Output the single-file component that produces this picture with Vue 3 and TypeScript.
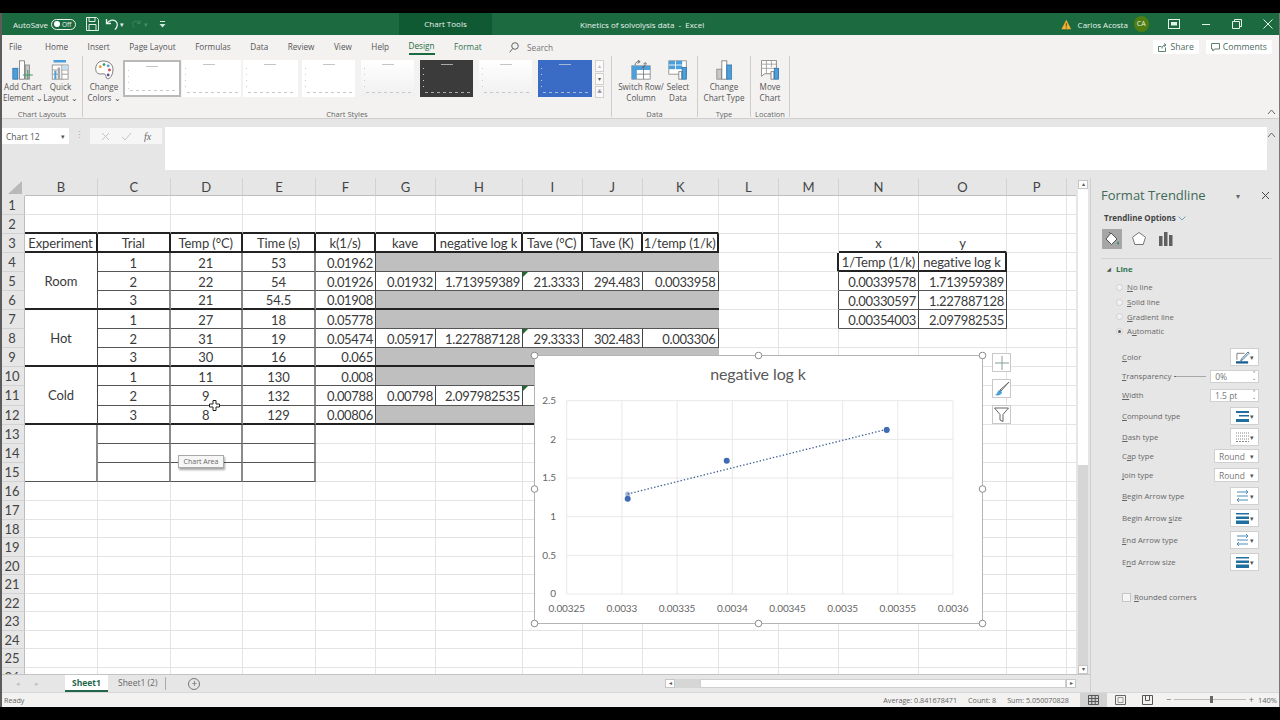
<template>
  <div class="screen">
    <div class="window">
      <header class="titlebar">
        <div class="qat">
          <span class="autosave">AutoSave</span>
          <span class="toggle"><i></i>Off</span>
          <svg class="qicon" width="13" height="14" viewBox="0 0 13 14" fill="none" stroke="#dfeee6"><path d="M.5.5h10l2 2v11H.5z" /><path d="M3 .5v4h6v-4M3 13.5v-6h7v6" /></svg>
          <svg class="qicon undo" width="15" height="13" viewBox="0 0 15 13" fill="none" stroke="#e8f2ec" stroke-width="1.3"><path d="M1.5 1v4.5H6" /><path d="M1.8 5.3C4 2.2 8 1.2 10.5 3c2.6 1.9 2.500 5.600-.6 8.600" /></svg>
          <span class="caret light">▾</span>
          <svg class="qicon dim" width="10" height="10" viewBox="0 0 15 13" fill="none" stroke="#4c8c6b" stroke-width="1.2"><path d="M13.500 1v4.500H9" /><path d="M13.200 5.300C11 2.200 7 1.200 4.500 3 1.900 4.900 2 8.600 5.100 11.600" /></svg>
          <span class="caret dimtxt">▾</span>
          <svg class="qicon more" width="7" height="7" viewBox="0 0 7 7" fill="#d5e6dc"><path d="M1 0h5v1H1zM.5 3h6L3.500 6.500z" /></svg>
        </div>
        <div class="context">Chart Tools</div>
        <div class="doc">Kinetics of solvolysis data&nbsp; -&nbsp; Excel</div>
        <div class="account">
          <svg width="11" height="11" viewBox="0 0 11 11"><path d="M5.500.5l5 10h-10z" fill="#f2b233" /><path d="M5.500 4v3.500M5.500 8.500v1" stroke="#5a3d00" /></svg>
          <span class="user">Carlos Acosta</span>
          <span class="avatar">CA</span>
        </div>
        <div class="winbtns">
          <svg width="12" height="10" viewBox="0 0 12 10" fill="none" stroke="#e6f1ea"><rect x=".5" y=".5" width="11" height="9" /><path d="M3 3h6v3.500H3z" fill="#e6f1ea" stroke="none" /></svg>
          <svg width="10" height="10" viewBox="0 0 10 10" stroke="#e6f1ea"><path d="M1 5.500h8" /></svg>
          <svg width="10" height="10" viewBox="0 0 10 10" fill="none" stroke="#e6f1ea"><path d="M.5 2.500h7v7h-7zM2.500 2.500v-2h7v7h-2" /></svg>
          <svg width="10" height="10" viewBox="0 0 10 10" stroke="#e6f1ea"><path d="M.5.500l9 9M9.500.500l-9 9" /></svg>
        </div>
      </header>

      <nav class="tabs">
        <span v-for="t in tabs" :key="t" class="tab" :class="{ active: t === 'Design', green: t === 'Format', first: t === 'File' }">{{ t }}</span>
        <span class="search">
          <svg width="10" height="11" viewBox="0 0 10 11" fill="none" stroke="#666"><circle cx="6" cy="4" r="3.300" /><path d="M3.700 6.500L.7 10.300" /></svg>
          Search
        </span>
        <span class="spacer"></span>
        <span class="pill">
          <svg width="9" height="9" viewBox="0 0 9 9" fill="none" stroke="#5f7f70"><path d="M.5 3.500h3M.5 3.500v5h7v-4M4 5.500c0-2 1.500-3.500 3.500-3.500M6 .500l2 1.500-2 1.500" /></svg>
          Share
        </span>
        <span class="pill">
          <svg width="9" height="9" viewBox="0 0 9 9" fill="none" stroke="#5f7f70"><path d="M.5.500h8v5.500H3.500L1.800 8V6H.5z" /></svg>
          Comments
        </span>
      </nav>

      <section class="ribbon">
        <div class="group g-layouts">
          <div class="items">
            <div class="cmd w-add">
              <svg width="26" height="24" viewBox="0 0 26 24" fill="none"><rect x="1" y="10" width="6" height="13" fill="#4d9fd9" stroke="#2b74ad" /><rect x="9" y="1" width="6" height="22" fill="#fff" stroke="#777" /><rect x="16" y="6" width="5" height="17" fill="#c8c8c8" stroke="#888" /><path d="M13 18h12M19 12v11" stroke="#3f9a6a" stroke-width="1.300" /></svg>
              <span>Add Chart<br />Element ⌄</span>
            </div>
            <div class="cmd w-quick">
              <svg width="22" height="24" viewBox="0 0 22 24" fill="none"><rect x="3" y="0" width="15" height="3" fill="#4d9fd9" /><rect x="1.500" y="6" width="19" height="17" fill="#fff" stroke="#8a8a8a" /><path d="M1.500 12h7M13 12h7M1.500 17h7M13 17h7M13 6v17" stroke="#8a8a8a" /><rect x="4" y="13" width="2.500" height="10" fill="#4d9fd9" /><rect x="8" y="9" width="3" height="14" fill="#a8a8a8" /><rect x="14" y="7" width="6" height="4" fill="#bde0f5" /></svg>
              <span>Quick<br />Layout ⌄</span>
            </div>
          </div>
          <div class="glabel">Chart Layouts</div>
        </div>

        <div class="group g-styles">
          <div class="items">
            <div class="cmd w-colors">
              <svg width="24" height="24" viewBox="0 0 24 24" fill="#fff" stroke="#666"><path d="M6 2.500c5-3 15-1 16.500 6.500 1 5-1.500 13.500-6 13.500-3.500 0-1-4-3.500-5.500-3-1.500-5 1-8.500-1C1 14 1 6 6 2.500z" /><circle cx="7.500" cy="8" r="1.700" fill="#e0a52e" stroke="none" /><circle cx="12" cy="5.500" r="1.700" fill="#3f9a6a" stroke="none" /><circle cx="17" cy="7" r="1.700" fill="#4d9fd9" stroke="none" /><circle cx="18.500" cy="12" r="1.700" fill="#c94c4c" stroke="none" /><circle cx="17" cy="18" r="1.700" fill="#6a4fa0" stroke="none" /></svg>
              <span>Change<br />Colors ⌄</span>
            </div>
            <div class="gallery">
              <div v-for="(t, i) in thumbs" :key="i" class="thumb" :class="t">
                <i class="ttl"></i>
                <i class="dots"></i>
                <i class="axis"></i>
              </div>
              <div class="spin">
                <span>▴</span>
                <span>▾</span>
                <span>≚</span>
              </div>
            </div>
          </div>
          <div class="glabel">Chart Styles</div>
        </div>

        <div class="group g-data">
          <div class="items">
            <div class="cmd w-switch">
              <svg width="24" height="24" viewBox="0 0 24 24" fill="none"><rect x="1" y="7" width="22" height="16" fill="#fff" stroke="#888" /><rect x="1" y="7" width="22" height="5" fill="#4d9fd9" /><rect x="1" y="7" width="6" height="16" fill="#4d9fd9" /><path d="M7 17h16M15 7v16" stroke="#777" /><path d="M5 6c0-3 2-4 5-4M8 0l3 2-3 2M13 9c3 0 4-2 4-5M15 5l2-2 2 2" stroke="#555" /></svg>
              <span>Switch Row/<br />Column</span>
            </div>
            <div class="cmd w-select">
              <svg width="24" height="24" viewBox="0 0 24 24" fill="none"><rect x="1" y="1" width="21" height="16" fill="#fff" stroke="#888" /><rect x="1" y="1" width="16" height="10" fill="#4d9fd9" /><path d="M1 6h16M9 1v10" stroke="#fff" /><rect x="13" y="14" width="3.500" height="9" fill="#fff" stroke="#777" /><rect x="17" y="9" width="5" height="14" fill="#4d9fd9" stroke="#2b74ad" /></svg>
              <span>Select<br />Data</span>
            </div>
          </div>
          <div class="glabel">Data</div>
        </div>

        <div class="group g-type">
          <div class="items">
            <div class="cmd w-change">
              <svg width="20" height="24" viewBox="0 0 20 24" fill="none"><rect x="1" y="11" width="5.500" height="12" fill="#c8c8c8" stroke="#888" /><rect x="7" y="1" width="6" height="22" fill="#fff" stroke="#777" /><rect x="13" y="6" width="6" height="17" fill="#4d9fd9" stroke="#2b74ad" /></svg>
              <span>Change<br />Chart Type</span>
            </div>
          </div>
          <div class="glabel">Type</div>
        </div>

        <div class="group g-loc">
          <div class="items">
            <div class="cmd w-move">
              <svg width="22" height="24" viewBox="0 0 22 24" fill="none"><path d="M.5.500h18v16h-14l-4 3z" fill="#fff" stroke="#777" /><path d="M.5 5h18M.5 10h18M6.500.5v16M12.500.5v8" stroke="#999" /><rect x="12" y="14" width="3.500" height="9" fill="#fff" stroke="#777" /><rect x="16" y="10" width="5" height="13" fill="#4d9fd9" stroke="#2b74ad" /></svg>
              <span>Move<br />Chart</span>
            </div>
          </div>
          <div class="glabel">Location</div>
        </div>

        <svg class="collapse" width="9" height="6" viewBox="0 0 9 6" fill="none" stroke="#666"><path d="M1 5l3.500-4L8 5" /></svg>
      </section>

      <section class="formula">
        <div class="namebox">Chart 12<span>▾</span></div>
        <div class="fdots">⋮</div>
        <div class="fxbox">
          <svg width="9" height="9" viewBox="0 0 9 9" stroke="#c4c4c4" fill="none"><path d="M1 1l7 7M8 1L1 8" /></svg>
          <svg width="11" height="9" viewBox="0 0 11 9" stroke="#c4c4c4" fill="none"><path d="M1 5l3 3 6-7" /></svg>
          <i class="fx">fx</i>
        </div>
        <div class="finput"></div>
        <svg class="fcaret" width="9" height="6" viewBox="0 0 9 6" fill="none" stroke="#666"><path d="M1 5l3.500-4L8 5" /></svg>
      </section>

      <div class="main">
        <div class="workbook">
          <div class="sheetarea">
            <div class="sheet">
              <div class="corner"><i></i></div>
              <div v-for="c in colLetters" :key="c" class="colhead">{{ c }}</div>
              <div v-for="cell in cells" :key="cell.key" :class="cell.cls">{{ cell.text }}</div>

              <div class="chart">
                <svg class="chartsvg" width="449" height="269" viewBox="0 0 449 269">
                  <line v-for="y in yTicks" :key="'gy' + y.label" x1="32.700" x2="419" :y1="y.y" :y2="y.y" class="gridl" />
                  <line v-for="x in xTicks" :key="'gx' + x.label" :x1="x.x" :x2="x.x" y1="45.700" y2="239" class="gridl" />
                  <text x="224" y="18" class="ctitle">negative log k</text>
                  <text v-for="y in yTicks" :key="'ly' + y.label" x="22" :y="y.y - 0.8" class="ylab">{{ y.label }}</text>
                  <text v-for="x in xTicks" :key="'lx' + x.label" :x="x.x" y="253" class="xlab">{{ x.label }}</text>
                  <circle cx="93.700" cy="139" r="2.600" fill="#a9bbdb" />
                  <circle cx="352.700" cy="74.300" r="2.600" fill="#7f9bd0" />
                  <line x1="93.700" y1="139" x2="352.700" y2="74.300" stroke="#3f6192" stroke-width="1.300" stroke-dasharray="1.400 2" />
                  <circle v-for="p in points" :key="p.x" :cx="p.x" :cy="p.y" r="3" fill="#3e6bb3" />
                  <circle v-for="h in handles" :key="h.x + '-' + h.y" :cx="h.x" :cy="h.y" r="3.300" fill="#fff" stroke="#8c8c8c" />
                </svg>
                <div class="adorn">
                  <span><svg width="14" height="14" viewBox="0 0 14 14" stroke="#8a9e94"><path d="M7 0v14M0 7h14" /></svg></span>
                  <span><svg width="16" height="16" viewBox="0 0 16 16" fill="none"><path d="M15 1L7 10l-1-1z" fill="#fff" stroke="#666" /><path d="M6 9c-3 0-2 4-5 5 3 1 7 0 7-3z" fill="#4d9fd9" /></svg></span>
                  <span><svg width="15" height="15" viewBox="0 0 15 15" fill="#fff" stroke="#666"><path d="M.5 1h14L9 7.500v7l-3-1.500V7.500z" /></svg></span>
                </div>
              </div>

              <div class="tip">Chart Area</div>
              <svg class="cursor" width="11" height="11" viewBox="0 0 11 11" fill="#fff" stroke="#222"><path d="M4 .5h3v3.500h3.500v3H7v3.500H4V7H.5V4H4z" /></svg>
            </div>
            <div class="vscroll">
              <span class="sbtn">▴</span>
              <span class="vthumb"></span>
              <span class="vtrack"></span>
              <span class="sbtn">▾</span>
            </div>
          </div>

          <div class="sheettabs">
            <span class="nav">◂</span>
            <span class="nav">▸</span>
            <span class="stab on">Sheet1</span>
            <span class="stab">Sheet1 (2)</span>
            <i class="sep"></i>
            <span class="plus">+</span>
            <span class="hscroll">
              <span class="sbtn">◂</span>
              <span class="htrack"></span>
              <span class="hthumb"></span>
              <span class="sbtn">▸</span>
            </span>
          </div>
        </div>

        <aside class="pane">
          <div class="panehead">
            <span class="panetitle">Format Trendline</span>
            <span class="panecaret">▾</span>
            <svg width="9" height="9" viewBox="0 0 9 9" stroke="#444"><path d="M1 1l7 7M8 1L1 8" /></svg>
          </div>
          <div class="paneopts">Trendline Options <svg width="8" height="5" viewBox="0 0 8 5" fill="none" stroke="#6f9ec0"><path d="M.5.500L4 4 7.500.500" /></svg></div>
          <div class="paneicons">
            <span class="picon sel">
              <svg width="16" height="16" viewBox="0 0 16 16"><path d="M7 2l6 6-5.500 5.500L2 8z" fill="#fff" stroke="#555" /><path d="M5 1l2 2" stroke="#555" /><path d="M14 10c.8 1.300 1.500 2.200.8 3.200-1 .8-2.500-.6-.8-3.200z" fill="#2f8a5a" /></svg>
            </span>
            <span class="picon">
              <svg width="16" height="16" viewBox="0 0 16 16" fill="#fff" stroke="#777"><path d="M8 1.500l6.500 4.700-2.300 7.300H3.800L1.500 6.200z" /></svg>
            </span>
            <span class="picon">
              <svg width="14" height="14" viewBox="0 0 14 14" fill="#5f5f5f"><rect y="4" width="3.500" height="10" /><rect x="5" y="0" width="3.500" height="14" /><rect x="10" y="3" width="3.500" height="11" /></svg>
            </span>
          </div>
          <div class="paneline"></div>
          <div class="section"><span class="tri">◢</span>Line</div>
          <div class="radios">
            <div v-for="r in radios" :key="r.label" class="radio">
              <i :class="{ on: r.on }"></i>
              <span>{{ r.label.split('_')[0] }}<u>{{ r.label.split('_')[1][0] }}</u>{{ r.label.split('_')[1].slice(1) }}</span>
            </div>
          </div>
          <div class="props">
            <div v-for="p in props" :key="p.label" class="prop" :class="'h' + p.h">
              <span class="plabel">{{ p.label.split('_')[0] }}<u>{{ p.label.split('_')[1][0] }}</u>{{ p.label.split('_')[1].slice(1) }}</span>
              <span v-if="p.kind === 'slider'" class="slider"></span>
              <span v-if="p.kind === 'spin' || p.kind === 'slider'" class="ctl spinbox">{{ p.value }}<em>⌃<br />⌄</em></span>
              <span v-else-if="p.kind === 'select'" class="ctl select">{{ p.value }}<em>▾</em></span>
              <span v-else class="ctl iconbtn">
                <svg v-if="p.kind === 'pen'" width="15" height="13" viewBox="0 0 15 13" fill="none"><path d="M1 9V2h8" stroke="#777" /><path d="M13 .5L6 8l-1 2 2-1 7-7z" fill="#fff" stroke="#3d6a95" /><rect y="10.500" width="13" height="2.500" fill="#1f5f8f" /></svg>
                <svg v-else-if="p.kind === 'lines'" width="13" height="11" viewBox="0 0 13 11" fill="#1f6f9f"><rect width="13" height="2" /><rect x="3" y="4" width="10" height="1.500" /><rect y="8" width="13" height="3" /></svg>
                <svg v-else-if="p.kind === 'dash'" width="13" height="10" viewBox="0 0 13 10" stroke="#888" stroke-dasharray="1 1"><path d="M0 1h13M0 4h13M0 7h13" /><path d="M0 9.500h13" stroke-dasharray="2 1" /></svg>
                <svg v-else-if="p.kind === 'arrow'" width="13" height="12" viewBox="0 0 13 12" fill="none" stroke="#4d8fb5"><path d="M1 2h11M1 6h11M1 10h11M10 0l2 2-2 2M3 8l-2 2 2 2" /></svg>
                <svg v-else width="13" height="11" viewBox="0 0 13 11" fill="#1f6f9f"><rect width="13" height="1.500" /><rect y="3.500" width="13" height="2.500" /><rect y="7.500" width="13" height="3.500" /></svg>
                <em>▾</em>
              </span>
            </div>
          </div>
          <div class="rounded"><i></i><span><u>R</u>ounded corners</span></div>
        </aside>
      </div>

      <footer class="status">
        <span>Ready</span>
        <span class="spacer"></span>
        <span class="stat s1">Average: 0.841678471</span>
        <span class="stat s2">Count: 8</span>
        <span class="stat s3">Sum: 5.050070828</span>
        <span class="view on"><svg width="11" height="10" viewBox="0 0 11 10" fill="none" stroke="#555"><path d="M.5.500h10v9H.5zM.5 3.500h10M.5 6.500h10M3.800.5v9M7.200.5v9" /></svg></span>
        <span class="view"><svg width="11" height="10" viewBox="0 0 11 10" fill="none" stroke="#666"><path d="M.5.500h10v9H.5z" /><path d="M3 2.500h5v5H3z" stroke="#999" /></svg></span>
        <span class="view"><svg width="11" height="10" viewBox="0 0 11 10" fill="none" stroke="#555"><path d="M.5.500h10v9H.5zM3.500.5v5h4v-5" /></svg></span>
        <span class="zoomer">
          <b>−</b>
          <span class="ztrack"><i></i></span>
          <b>+</b>
        </span>
        <span class="pct">140%</span>
      </footer>
    </div>
  </div>
</template>

<script setup lang="ts">
const tabs = ['File', 'Home', 'Insert', 'Page Layout', 'Formulas', 'Data', 'Review', 'View', 'Help', 'Design', 'Format']
const thumbs = ['selected', 'wide', 'mid', '', 'soft', 'dark', 'soft', 'blue']
const colLetters = ['B', 'C', 'D', 'E', 'F', 'G', 'H', 'I', 'J', 'K', 'L', 'M', 'N', 'O', 'P', '']

const values: Record<number, Record<string, string>> = {
  3: { B: 'Experiment', C: 'Trial', D: 'Temp (°C)', E: 'Time (s)', F: 'k(1/s)', G: 'kave', H: 'negative log k', I: 'Tave (°C)', J: 'Tave (K)', K: '1/temp (1/k)', N: 'x', O: 'y' },
  4: { B: 'Room', C: '1', D: '21', E: '53', F: '0.01962', N: '1/Temp (1/k)', O: 'negative log k' },
  5: { C: '2', D: '22', E: '54', F: '0.01926', G: '0.01932', H: '1.713959389', I: '21.3333', J: '294.483', K: '0.0033958', N: '0.00339578', O: '1.713959389' },
  6: { C: '3', D: '21', E: '54.5', F: '0.01908', N: '0.00330597', O: '1.227887128' },
  7: { B: 'Hot', C: '1', D: '27', E: '18', F: '0.05778', N: '0.00354003', O: '2.097982535' },
  8: { C: '2', D: '31', E: '19', F: '0.05474', G: '0.05917', H: '1.227887128', I: '29.3333', J: '302.483', K: '0.003306' },
  9: { C: '3', D: '30', E: '16', F: '0.065' },
  10: { B: 'Cold', C: '1', D: '11', E: '130', F: '0.008' },
  11: { C: '2', D: '9', E: '132', F: '0.00788', G: '0.00798', H: '2.097982535' },
  12: { C: '3', D: '8', E: '129', F: '0.00806' }
}

const grayRows = [4, 6, 7, 9, 10, 12]
const blockEnd = [6, 9, 12]
const inMain = (c: string) => 'BCDEFGHIJK'.includes(c)
const inMeasure = (c: string) => 'CDEF'.includes(c)
const inCalc = (c: string) => 'GHIJK'.includes(c)
const rightTable = (c: string) => c === 'N' || c === 'O'

function cellClasses(r: number, c: string): string[] {
  const cls = ['cell']
  const isNum = 'FGHIJKNO'.includes(c) && r > 3 && !(r === 4 && rightTable(c))
  cls.push(isNum ? 'right' : 'center')

  if (inCalc(c) && grayRows.includes(r)) cls.push('fill')

  // bottom edges
  if (r === 2 && inMain(c)) cls.push('bb2')
  if (r === 3 && (inMain(c) || rightTable(c))) cls.push('bb2')
  if (r >= 4 && r <= 12 && (inMeasure(c) || inCalc(c))) cls.push(blockEnd.includes(r) ? 'bb2' : 'bb1')
  if (c === 'B' && [4, 7, 10].includes(r)) cls.push('bb2')
  if (r >= 13 && r <= 15 && 'CDE'.includes(c)) cls.push('bb1')
  if (c === 'B' && r === 13) cls.push('bb1')
  if (r === 4 && rightTable(c)) cls.push('bb2')
  if (r >= 5 && r <= 7 && rightTable(c)) cls.push('bb1')

  // right edges
  if (r === 3 && inMain(c)) cls.push('br2')
  if (r >= 4 && r <= 12 && (c === 'B' || c === 'F')) cls.push('br1')
  if (r >= 4 && r <= 12 && 'CDE'.includes(c)) cls.push('brg')
  if (r >= 13 && r <= 15 && 'BCDE'.includes(c)) cls.push('brg')
  if ([5, 8, 11].includes(r) && inCalc(c)) cls.push('br1')
  if (r >= 5 && r <= 7 && (c === 'M' || rightTable(c))) cls.push('br1')
  if (r === 4 && (c === 'M' || c === 'O')) cls.push('br2')
  if (r === 4 && c === 'N') cls.push('br1')

  if (c === 'B' && [4, 7, 10, 13].includes(r)) cls.push('span3')

  if (c === 'I' && [5, 8, 11].includes(r)) cls.push('flag')
  return cls
}

const covered = (r: number, c: string) => c === 'B' && [5, 6, 8, 9, 11, 12, 14, 15].includes(r)

const cells: { key: string; text: string; cls: string[] }[] = []
for (let r = 1; r <= 26; r++) {
  cells.push({ key: 'h' + r, text: String(r), cls: ['rowhead'] })
  for (const c of 'BCDEFGHIJKLMNOPQ') {
    if (covered(r, c)) continue
    cells.push({ key: c + r, text: values[r]?.[c] ?? '', cls: cellClasses(r, c) })
  }
}

const yTicks = ['2.5', '2', '1.5', '1', '0.5', '0'].map((label, i) => ({ label, y: 45.7 + i * 38.66 }))
const xTicks = ['0.00325', '0.0033', '0.00335', '0.0034', '0.00345', '0.0035', '0.00355', '0.0036'].map((label, i) => ({
  label,
  x: 32.7 + i * 55.19
}))
const points = [
  { x: 93.7, y: 143.7 },
  { x: 192.7, y: 105.7 },
  { x: 352.7, y: 75 }
]
const handles = [
  { x: 0.5, y: 0.5 },
  { x: 224.5, y: 0.5 },
  { x: 448.5, y: 0.5 },
  { x: 0.5, y: 134 },
  { x: 448.5, y: 134 },
  { x: 0.5, y: 268.5 },
  { x: 224.5, y: 268.5 },
  { x: 448.5, y: 268.5 }
]

const radios = [
  { label: '_No line', on: false },
  { label: '_Solid line', on: false },
  { label: '_Gradient line', on: false },
  { label: 'A_utomatic', on: true }
]

const props = [
  { label: '_Color', kind: 'pen', h: 20 },
  { label: '_Transparency', kind: 'slider', value: '0%', h: 18 },
  { label: '_Width', kind: 'spin', value: '1.5 pt', h: 20 },
  { label: '_Compound type', kind: 'lines', h: 22 },
  { label: '_Dash type', kind: 'dash', h: 20 },
  { label: 'C_ap type', kind: 'select', value: 'Round', h: 18 },
  { label: '_Join type', kind: 'select', value: 'Round', h: 20 },
  { label: '_Begin Arrow type', kind: 'arrow', h: 22 },
  { label: 'Begin Arrow _size', kind: 'size', h: 22 },
  { label: '_End Arrow type', kind: 'arrow', h: 22 },
  { label: 'E_nd Arrow size', kind: 'size', h: 22 }
]
</script>

<style>
html,
body {
  background: #000;
}
</style>

<style scoped>
.screen {
  width: 1280px;
  height: 720px;
  padding: 13px 0;
  box-sizing: border-box;
  background: #000;
  overflow: hidden;
  font-family: 'Open Sans', 'Liberation Sans', sans-serif;
  color: #555;
}
.window {
  height: 694px;
  display: flex;
  flex-direction: column;
  border-left: 2px solid #5c5c5c;
  border-right: 1px solid #777;
  box-sizing: border-box;
  background: #f3f2f1;
}
.spacer {
  flex: 1;
}

/* title bar */
.titlebar {
  height: 22px;
  flex: none;
  display: flex;
  align-items: center;
  background: #1c6a40;
  color: #e9f3ed;
  font-size: 8px;
  position: relative;
}
.qat {
  display: flex;
  align-items: center;
  width: 397px;
  padding-left: 11px;
  box-sizing: border-box;
}
.autosave {
  width: 38px;
}
.toggle {
  width: 25px;
  height: 11px;
  border: 1px solid #e9f3ed;
  border-radius: 7px;
  box-sizing: border-box;
  display: flex;
  align-items: center;
  gap: 2px;
  padding-left: 2px;
  font-size: 6.5px;
  margin-right: 10px;
}
.toggle i {
  width: 6px;
  height: 6px;
  border-radius: 50%;
  background: #fff;
}
.qicon {
  margin-right: 6px;
}
.undo {
  margin-right: 0;
}
.caret {
  font-size: 7px;
  margin-right: 7px;
}
.dimtxt {
  color: #4c8c6b;
  margin-left: -3px;
  margin-right: 11px;
}
.more {
  margin-left: 0;
}
.context {
  width: 93px;
  height: 22px;
  line-height: 22px;
  background: #105a33;
  text-align: center;
}
.doc {
  margin-left: 88px;
  width: 140px;
  white-space: nowrap;
}
.account {
  margin-left: 341px;
  display: flex;
  align-items: center;
  width: 88px;
}
.user {
  margin-left: 6px;
  width: 58px;
  white-space: nowrap;
}
.avatar {
  width: 16px;
  height: 16px;
  border-radius: 50%;
  background: #4f7d12;
  font-size: 7px;
  line-height: 16px;
  text-align: center;
}
.winbtns {
  margin-left: 19px;
  display: flex;
  gap: 21px;
  align-items: center;
}

/* tabs */
.tabs {
  height: 21px;
  flex: none;
  display: flex;
  align-items: center;
  gap: 19.5px;
  padding: 3px 7px 0 7px;
  box-sizing: border-box;
  font-size: 8.2px;
  color: #555;
}
.tab {
  height: 14px;
  line-height: 13px;
}
.tab.first {
  margin-right: 3.5px;
}
.tab.active {
  color: #1c6a40;
  border-bottom: 2px solid #1c6a40;
  box-sizing: content-box;
}
.tab.green {
  color: #2e7350;
}
.search {
  margin-left: 8px;
  display: flex;
  align-items: center;
  gap: 8px;
  color: #777;
}
.pill {
  height: 14px;
  background: #fff;
  display: flex;
  align-items: center;
  justify-content: center;
  gap: 3px;
  padding: 0 5px;
  font-size: 8.7px;
  color: #4b6b5c;
  margin-left: -12.5px;
}

/* ribbon */
.ribbon {
  height: 63px;
  flex: none;
  display: flex;
  position: relative;
  border-bottom: 1px solid #cfcfcf;
  box-sizing: border-box;
}
.group {
  display: flex;
  flex-direction: column;
  border-right: 1px solid #cdcdcd;
  margin-bottom: 1px;
  box-sizing: border-box;
}
.items {
  flex: 1;
  display: flex;
  min-height: 0;
}
.glabel {
  height: 6px;
  line-height: 6px;
  text-align: center;
  font-size: 7.5px;
  color: #666;
}
.g-layouts {
  width: 81px;
}
.g-styles {
  width: 529px;
}
.g-data {
  width: 86px;
}
.g-type {
  width: 53px;
}
.g-loc {
  width: 39px;
}
.cmd {
  display: flex;
  flex-direction: column;
  align-items: center;
  font-size: 8.1px;
  line-height: 11px;
  text-align: center;
  color: #555;
  padding-top: 4px;
  white-space: nowrap;
}
.cmd svg {
  height: 20px;
  width: auto;
  margin-bottom: 1px;
}
.w-add {
  width: 42px;
}
.w-quick {
  width: 33px;
}
.w-colors {
  width: 38px;
  margin-left: 2px;
}
.w-switch {
  width: 54px;
  margin-left: 2px;
}
.w-select {
  width: 22px;
  margin-left: -1px;
}
.w-change {
  width: 52px;
}
.w-move {
  width: 38px;
}
.gallery {
  display: flex;
  padding-top: 4px;
  height: 38px;
}
.thumb {
  width: 53px;
  height: 37px;
  margin-right: 6px;
  position: relative;
  background: #fff;
  box-sizing: border-box;
}
.thumb.selected {
  width: 58px;
  margin-right: 1px;
  border: 2px solid #b9b9b9;
}
.thumb.wide {
  width: 59px;
  margin-right: 2px;
}
.thumb.mid {
  width: 55px;
  margin-right: 4px;
}
.thumb.soft {
  background: linear-gradient(#fff, #f0f0f0);
}
.thumb.dark {
  background: #3b3b3b;
}
.thumb.blue {
  width: 54px;
  margin-right: 3px;
  background: #3a6cc6;
}
.ttl {
  position: absolute;
  top: 4px;
  left: 21px;
  width: 12px;
  height: 1px;
  background: #c4c4c4;
}
.dots {
  position: absolute;
  left: 3px;
  top: 8px;
  bottom: 5px;
  width: 1px;
  background: repeating-linear-gradient(#ccc 0 1px, transparent 1px 6px);
}
.axis {
  position: absolute;
  left: 5px;
  right: 3px;
  bottom: 4px;
  height: 1px;
  background: repeating-linear-gradient(90deg, #c8c8c8 0 3px, transparent 3px 6px);
}
.dark .ttl,
.blue .ttl,
.dark .axis,
.blue .axis {
  filter: brightness(1.1);
  opacity: 0.7;
}
.spin {
  width: 9px;
  height: 37px;
  display: flex;
  flex-direction: column;
  gap: 1px;
  font-size: 6px;
  text-align: center;
  color: #555;
}
.spin span {
  flex: 1;
  background: #fafafa;
  border: 1px solid #d0d0d0;
  line-height: 10px;
  box-sizing: border-box;
}
.spin span:first-child {
  color: #bbb;
}
.collapse {
  position: absolute;
  right: 3px;
  bottom: 3px;
}

/* formula bar */
.formula {
  height: 59px;
  flex: none;
  background: #e6e6e6;
  display: flex;
  align-items: flex-start;
  padding-top: 8px;
  box-sizing: border-box;
  position: relative;
  font-size: 8.5px;
}
.namebox {
  width: 67px;
  height: 16px;
  margin-top: 1px;
  background: #fff;
  display: flex;
  align-items: center;
  justify-content: space-between;
  padding: 0 4px;
  box-sizing: border-box;
  color: #555;
}
.namebox span {
  font-size: 7px;
}
.fdots {
  width: 21px;
  text-align: center;
  color: #aaa;
  line-height: 16px;
}
.fxbox {
  width: 72px;
  height: 16px;
  margin-top: 1px;
  background: #f6f6f6;
  display: flex;
  align-items: center;
  justify-content: space-around;
  padding: 0 5px;
  box-sizing: border-box;
}
.fx {
  font-family: 'Liberation Serif', serif;
  font-size: 10px;
  color: #666;
}
.finput {
  margin-left: 3px;
  width: 1102px;
  height: 43px;
  background: #fff;
}
.fcaret {
  position: absolute;
  right: 3px;
  top: 13px;
}

/* sheet */
.main {
  flex: 1;
  min-height: 0;
  display: flex;
}
.workbook {
  width: 1089px;
  flex: none;
  display: flex;
  flex-direction: column;
  background: #e6e6e6;
  border-right: 1px solid #cfcfcf;
  box-sizing: border-box;
}
.sheetarea {
  height: 496px;
  flex: none;
  display: flex;
}
.sheet {
  width: 1075px;
  height: 496px;
  overflow: hidden;
  position: relative;
  display: grid;
  grid-template-columns: 23px 73px 72.500px 72.500px 73px 60px 60px 87px 59.500px 60.500px 75.500px 60.500px 60px 80px 88px 60px 10px;
  grid-template-rows: 18px repeat(17, 19.050px) repeat(8, 18.500px) 7px;
  background: #fff;
  font-family: Lato, 'Liberation Sans', sans-serif;
  font-size: 13px;
  letter-spacing: -0.1px;
  color: #3a3a3a;
}
.corner {
  background: #e6e6e6;
  position: relative;
}
.corner i {
  position: absolute;
  right: 3px;
  bottom: 2px;
  border-style: solid;
  border-width: 0 0 13px 14px;
  border-color: transparent transparent #b9b9b9 transparent;
}
.colhead {
  background: #e6e6e6;
  border-right: 1px solid #d2d2d2;
  border-bottom: 1px solid #bdbdbd;
  box-sizing: border-box;
  text-align: center;
  line-height: 18px;
  color: #444;
}
.rowhead {
  background: #e6e6e6;
  border-right: 1px solid #bdbdbd;
  border-bottom: 1px solid #d2d2d2;
  box-sizing: border-box;
  text-align: center;
  line-height: 19px;
  color: #444;
  padding-right: 2px;
  overflow: hidden;
}
.cell {
  border-right: 1px solid #e3e3e3;
  border-bottom: 1px solid #e3e3e3;
  box-sizing: border-box;
  display: flex;
  align-items: center;
  padding-top: 1px;
  white-space: nowrap;
  overflow: hidden;
  min-width: 0;
  position: relative;
}
.center {
  justify-content: center;
}
.right {
  justify-content: flex-end;
  padding-right: 2px;
  letter-spacing: -0.32px;
}
.fill {
  background: #bfbfbf;
  border-right: 0;
  border-bottom-color: transparent;
}
.bb1 {
  border-bottom: 1px solid #555;
}
.bb2 {
  border-bottom: 2px solid #222;
}
.br1 {
  border-right: 1px solid #444;
}
.brg {
  border-right: 2px solid #8a8a8a;
}
.br2 {
  border-right: 2px solid #222;
}
.span3 {
  grid-row: span 3;
}
.flag::before {
  content: '';
  position: absolute;
  left: 0;
  top: 0;
  border-style: solid;
  border-width: 5px 5px 0 0;
  border-color: #1c6e2c transparent transparent transparent;
}

/* chart overlay */
.chart {
  position: absolute;
  left: 532px;
  top: 177px;
  width: 449px;
  height: 269px;
  background: #fff;
  box-shadow: inset 0 0 0 1px #b4b4b4;
}
.chartsvg {
  overflow: visible;
  display: block;
  position: relative;
  z-index: 1;
}
.gridl {
  stroke: #e8e8e8;
  stroke-width: 1;
}
.ctitle {
  font-size: 16px;
  fill: #595959;
  text-anchor: middle;
  dominant-baseline: central;
}
.ylab,
.xlab {
  font-size: 10px;
  fill: #666;
  dominant-baseline: central;
}
.ylab {
  text-anchor: end;
}
.xlab {
  text-anchor: middle;
}
.adorn {
  position: absolute;
  left: 458px;
  top: -2px;
  display: flex;
  flex-direction: column;
  gap: 7px;
}
.adorn span {
  width: 19px;
  height: 19px;
  background: #fff;
  border: 1px solid #c8c8c8;
  box-sizing: border-box;
  display: flex;
  align-items: center;
  justify-content: center;
}
.tip {
  position: absolute;
  left: 176px;
  top: 277px;
  width: 46px;
  height: 13px;
  line-height: 11px;
  border: 1px solid #aaa;
  box-sizing: border-box;
  background: #f6f6f6;
  box-shadow: 1px 2px 2px rgba(0, 0, 0, 0.35);
  font-family: 'Open Sans', sans-serif;
  font-size: 7px;
  letter-spacing: 0;
  text-align: center;
  color: #666;
}
.cursor {
  position: absolute;
  left: 207px;
  top: 222px;
}

/* scrollbars */
.vscroll {
  width: 14px;
  padding: 2px 2px 0 2px;
  box-sizing: border-box;
  display: flex;
  flex-direction: column;
}
.sbtn {
  width: 10px;
  height: 9px;
  background: #fff;
  border: 1px solid #c6c6c6;
  box-sizing: border-box;
  font-size: 6px;
  line-height: 7px;
  text-align: center;
  color: #555;
  flex: none;
}
.vthumb {
  width: 10px;
  height: 276px;
  background: #fff;
  flex: none;
}
.vtrack {
  flex: 1;
  width: 10px;
  background: #d6d6d6;
}

/* sheet tabs */
.sheettabs {
  flex: 1;
  display: flex;
  align-items: center;
  font-size: 8.5px;
  color: #666;
  border-top: 1px solid #c4c4c4;
}
.nav {
  width: 19px;
  margin-left: 0;
  text-align: center;
  color: #c2c2c2;
  font-size: 7px;
  position: relative;
  left: 6px;
}
.stab {
  height: 17px;
  line-height: 16px;
  padding: 0 8px;
  box-sizing: border-box;
}
.stab.on {
  background: #fff;
  color: #24664a;
  font-weight: 700;
  margin-left: 25px;
  border-bottom: 2px solid #24664a;
  margin-right: 2px;
  width: 43px;
  padding: 0;
  text-align: center;
}
.sep {
  width: 1px;
  height: 13px;
  background: #aaa;
}
.plus {
  margin-left: 22px;
  width: 10px;
  height: 10px;
  border: 1px solid #777;
  border-radius: 50%;
  text-align: center;
  line-height: 9px;
  font-size: 10px;
}
.hscroll {
  margin-left: auto;
  margin-right: 14px;
  width: 411px;
  display: flex;
  align-items: center;
}
.htrack {
  width: 25px;
  height: 9px;
  background: #d6d6d6;
}
.hthumb {
  flex: 1;
  height: 9px;
  background: #fff;
  border: 1px solid #cfcfcf;
  box-sizing: border-box;
}

/* task pane */
.pane {
  flex: 1;
  background: #e6e6e6;
  padding-left: 10px;
  padding-top: 1px;
  box-sizing: border-box;
  font-size: 7.800px;
  color: #666;
  min-width: 0;
}
.panehead {
  height: 32px;
  display: flex;
  align-items: center;
  padding-right: 9px;
}
.panetitle {
  font-size: 13px;
  color: #3f6a58;
  flex: 1;
  white-space: nowrap;
}
.panecaret {
  margin-right: 21px;
  font-size: 8px;
}
.paneopts {
  height: 14px;
  line-height: 14px;
  margin-left: 3px;
  font-weight: 700;
  color: #444;
  font-size: 8px;
}
.paneicons {
  display: flex;
  align-items: center;
  gap: 7px;
  height: 20px;
  margin-top: 4px;
  padding-left: 1px;
}
.picon {
  width: 20px;
  height: 20px;
  display: flex;
  align-items: center;
  justify-content: center;
}
.picon.sel {
  background: #a6a6a6;
}
.paneline {
  height: 1px;
  margin-top: 9px;
  margin-right: 7px;
  background: #d2d2d2;
}
.section {
  height: 20px;
  line-height: 20px;
  padding-left: 6px;
  color: #2e7350;
  font-weight: 700;
}
.tri {
  font-size: 5px;
  color: #555;
  margin-right: 5px;
  position: relative;
  top: -1px;
}
.radios {
  margin-top: 1px;
  padding-left: 15px;
}
.radio {
  height: 14.700px;
  display: flex;
  align-items: center;
  gap: 4px;
}
.radio i {
  width: 7px;
  height: 7px;
  border-radius: 50%;
  background: #f2f2f2;
  border: 1px solid #d0d0d0;
  box-sizing: border-box;
  display: flex;
  align-items: center;
  justify-content: center;
}
.radio i.on::after {
  content: '';
  width: 3px;
  height: 3px;
  border-radius: 50%;
  background: #555;
}
.props {
  margin-top: 8.500px;
  padding-left: 21px;
  padding-right: 20px;
}
.prop {
  display: flex;
  align-items: center;
  gap: 4px;
}
.h18 {
  height: 18px;
}
.h20 {
  height: 20px;
}
.h22 {
  height: 22px;
}
.plabel {
  flex: 1;
  white-space: nowrap;
}
.slider {
  width: 30px;
  height: 1px;
  background: #a8a8a8;
  border-left: 1px solid #666;
  box-shadow: -1px 0 0 #777;
}
.ctl {
  background: #fff;
  border: 1px solid #d0d0d0;
  box-sizing: border-box;
  display: flex;
  align-items: center;
  justify-content: space-between;
  color: #777;
  font-size: 8.500px;
}
.ctl em {
  font-style: normal;
  font-size: 7px;
  color: #555;
}
.iconbtn {
  width: 29px;
  height: 18px;
  padding: 0 4px 0 5px;
}
.spinbox {
  width: 49px;
  height: 13px;
  padding: 0 2px 0 4px;
}
.spinbox em {
  line-height: 5px;
  font-size: 5px;
  text-align: center;
}
.select {
  width: 45px;
  height: 14px;
  padding: 0 4px;
}
.rounded {
  display: flex;
  align-items: center;
  gap: 3px;
  margin: 19px 0 0 21px;
}
.rounded i {
  width: 9px;
  height: 9px;
  background: #f5f5f5;
  border: 1px solid #c6c6c6;
  box-sizing: border-box;
}

/* status bar */
.status {
  height: 15px;
  flex: none;
  display: flex;
  align-items: center;
  font-size: 7.200px;
  color: #666;
  padding-left: 2px;
  padding-bottom: 1px;
  border-top: 1px solid #d8d8d8;
  box-sizing: border-box;
}
.stat {
  white-space: nowrap;
}
.s1 {
  margin-right: 11px;
}
.s2 {
  margin-right: 11px;
}
.s3 {
  margin-right: 11px;
}
.view {
  width: 27px;
  height: 14px;
  display: flex;
  align-items: center;
  justify-content: center;
}
.view.on {
  background: #d2d2d2;
}
.zoomer {
  display: flex;
  align-items: center;
  gap: 3px;
  margin-left: 5px;
  width: 88px;
}
.zoomer b {
  font-weight: 400;
  font-size: 9px;
}
.ztrack {
  flex: 1;
  height: 1px;
  background: #bbb;
  position: relative;
}
.ztrack i {
  position: absolute;
  left: 36px;
  top: -3px;
  width: 3px;
  height: 7px;
  background: #666;
}
.pct {
  margin-left: 4px;
  margin-right: 2px;
  font-size: 7.500px;
}
</style>
